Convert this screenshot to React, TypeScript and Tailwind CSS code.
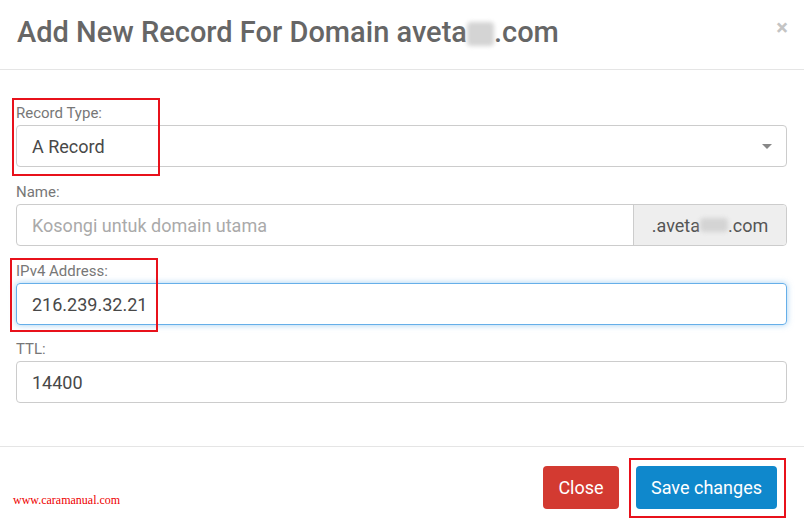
import React from "react"

const Blur = ({ w, h }: { w: string; h: string }) => (
  <span className={`inline-block ${w} ${h} bg-[#d4d4d4] blur-[2px] rounded-sm align-middle`} />
)

const Label = ({ children }: { children: React.ReactNode }) => (
  <label className="block h-[20px] leading-[20px] mb-[2px] text-[15px] text-[#777]">{children}</label>
)

export default function App() {
  return (
    <div className="relative w-[804px] h-[523px] bg-white font-['Roboto',sans-serif] overflow-hidden">
      {/* header */}
      <div className="h-[70px] border-b border-[#e5e5e5] flex items-center justify-between pl-[17px] pr-[16px]">
        <h4 className="text-[29px] font-medium text-[#666] leading-none mt-[-4px]">
          Add New Record For Domain aveta
          <Blur w="w-[27px]" h="h-[24px]" />
          .com
        </h4>
        <button type="button" className="text-[22px] font-bold text-[#c4c4c4] leading-none mt-[-14px]">
          ×
        </button>
      </div>

      {/* body */}
      <div className="pt-[33px] pl-[16px] pr-[17px] pb-[43px] border-b border-[#e5e5e5]">
        <div className="mb-[15px]">
          <Label>Record Type:</Label>
          <div className="h-[42px] border border-[#ccc] rounded-[4px] flex items-center justify-between pl-[15px] pr-[14px] text-[18px] text-[#484848]">
            <span>A Record</span>
            <span className="w-0 h-0 border-l-[5px] border-r-[5px] border-t-[5px] border-l-transparent border-r-transparent border-t-[#888]" />
          </div>
        </div>

        <div className="mb-[15px]">
          <Label>Name:</Label>
          <div className="h-[42px] border border-[#ccc] rounded-[4px] flex text-[18px]">
            <input
              className="flex-1 min-w-0 pl-[15px] outline-none bg-transparent text-[#484848] placeholder:text-[#aaa]"
              placeholder="Kosongi untuk domain utama"
            />
            <span className="w-[153px] border-l border-[#ccc] bg-[#eee] rounded-r-[4px] flex items-center justify-center text-[#555]">
              .aveta
              <Blur w="w-[28px]" h="h-[14px]" />
              .com
            </span>
          </div>
        </div>

        <div className="mb-[14px]">
          <Label>IPv4 Address:</Label>
          <input
            className="w-full h-[42px] border border-[#66afe9] rounded-[4px] pl-[15px] text-[18px] text-[#484848] outline-none shadow-[0_0_6px_rgba(102,175,233,0.6)]"
            defaultValue="216.239.32.21"
          />
        </div>

        <div>
          <Label>TTL:</Label>
          <input
            className="w-full h-[42px] border border-[#ccc] rounded-[4px] pl-[15px] text-[18px] text-[#484848] outline-none"
            defaultValue="14400"
          />
        </div>
      </div>

      {/* footer */}
      <div className="flex justify-between items-start pt-[19px] pl-[13px] pr-[27px]">
        <span className="mt-[25px] text-[12px] text-[#e00] font-['Liberation_Serif',serif]">www.caramanual.com</span>
        <div className="flex gap-[17px]">
          <button type="button" className="w-[76px] h-[43px] rounded-[4px] bg-[#d33a31] text-white text-[18px]">
            Close
          </button>
          <button type="button" className="w-[141px] h-[43px] rounded-[4px] bg-[#0f88cc] text-white text-[18px]">
            Save changes
          </button>
        </div>
      </div>

      {/* red annotation boxes */}
      <div className="absolute left-[12px] top-[98px] w-[148px] h-[78px] border-2 border-[#e8111b] pointer-events-none" />
      <div className="absolute left-[10px] top-[258px] w-[148px] h-[74px] border-2 border-[#e8111b] pointer-events-none" />
      <div className="absolute left-[629px] top-[458px] w-[157px] h-[60px] border-2 border-[#e8111b] pointer-events-none" />
    </div>
  )
}
